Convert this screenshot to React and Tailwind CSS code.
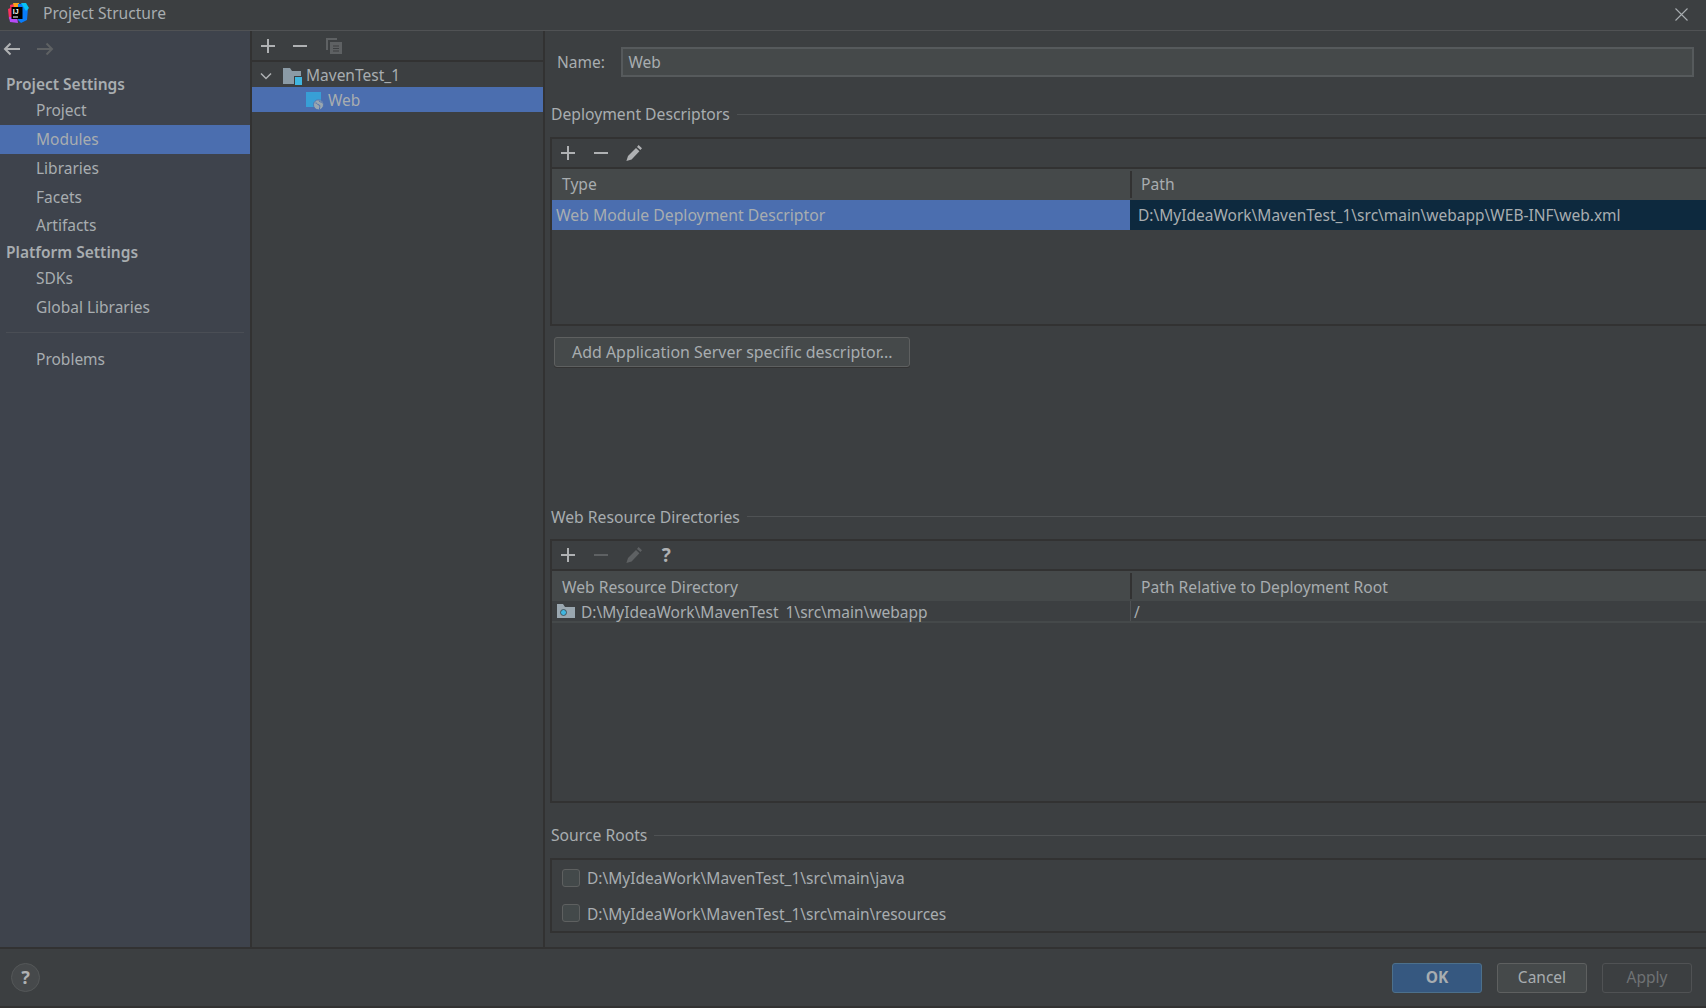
import React from "react";

const PlusIcon = ({ dim }) => (
  <svg width="14" height="14" viewBox="0 0 14 14" className={dim ? "text-[#5e6163]" : "text-[#afb1b3]"}>
    <path d="M6 0h2v6h6v2H8v6H6V8H0V6h6z" fill="currentColor" />
  </svg>
);

const MinusIcon = ({ dim }) => (
  <svg width="14" height="14" viewBox="0 0 14 14" className={dim ? "text-[#5e6163]" : "text-[#afb1b3]"}>
    <path d="M0 6h14v2H0z" fill="currentColor" />
  </svg>
);

const PencilIcon = ({ dim }) => (
  <svg width="18" height="18" viewBox="0 0 18 18" className={dim ? "text-[#5e6163]" : "text-[#afb1b3]"}>
    <path d="M13.6 1 17 4.2l-1.6 1.9-3.4-3.2zM11 4l3.4 3.2-7.8 8.2L1.4 17l1.6-5z" fill="currentColor" />
  </svg>
);

const CopyIcon = () => (
  <svg width="18" height="18" viewBox="0 0 18 18" className="text-[#5e6163]">
    <path d="M1 1h11v2H3v10H1z" fill="currentColor" />
    <path d="M5 5h12v12H5z" fill="currentColor" />
    <path d="M8 8.500h6v1H8zM8 11h6v1H8zM8 13.500h6v1H8z" fill="#3c3f41" />
  </svg>
);

const ArrowIcon = ({ right, dim }) => (
  <svg width="18" height="14" viewBox="0 0 18 14" className={dim ? "text-[#5e6163]" : "text-[#afb1b3]"}>
    <path
      d={right ? "M1 7h15M10.500 1.500 16 7l-5.500 5.500" : "M17 7H2M7.500 1.500 2 7l5.500 5.500"}
      stroke="currentColor"
      strokeWidth="2"
      fill="none"
    />
  </svg>
);

const AppLogo = () => (
  <svg width="22" height="22" viewBox="0 0 22 22">
    <path d="M3 2 11 0l1 6-8 4z" fill="#fe315d" />
    <path d="M6 0h6v4H7z" fill="#f9a01b" />
    <path d="M1 6l5-2 2 13-6-1z" fill="#fe315d" />
    <path d="M2 14h8l1 6-8-1z" fill="#b74af7" />
    <path d="M11 1h7l3 4-1 12-6 3-3-3z" fill="#087cfa" />
    <path d="M14 0h5l3 5-3 3z" fill="#07c3f2" />
    <path d="M4.500 4h11v12h-11z" fill="#000" />
    <path d="M6 13.500h5v1H6z" fill="#fff" />
    <text x="5.800" y="11" fontSize="7" fontWeight="700" fill="#fff" fontFamily="Liberation Sans, sans-serif">IJ</text>
  </svg>
);

const ModuleFolder = () => (
  <svg width="19" height="18" viewBox="0 0 19 18">
    <path d="M0 1h7l2 3h9v13H0z" fill="#8b9ba6" />
    <path d="M11 9h8v8h-8z" fill="#3c3f41" />
    <path d="M12 10h7v8h-7z" fill="#40b6e0" />
  </svg>
);

const WebModule = () => (
  <svg width="18" height="18" viewBox="0 0 18 18">
    <path d="M0 0h15v15H0z" fill="#389fd6" />
    <circle cx="12.500" cy="12.800" r="5" fill="#9aa7b0" stroke="#4b6eaf" strokeWidth="0.800" />
    <path d="M9.500 11c2 0 2 2 3.500 2s.5 2 .5 4M13 8.500c0 2 3 1 3.500 2.500" stroke="#4b6eaf" strokeWidth="1" fill="none" />
  </svg>
);

const WebRootFolder = () => (
  <svg width="18" height="14" viewBox="0 0 18 14">
    <path d="M0 0h6l2 3h10v11H0z" fill="#9aa7b0" />
    <circle cx="6.500" cy="8.500" r="3" fill="#40b6e0" stroke="#3c3f41" strokeWidth="0.800" />
  </svg>
);

const Chevron = () => (
  <svg width="12" height="8" viewBox="0 0 12 8" className="text-[#afb1b3]">
    <path d="M1 1.500 6 6.500l5-5" stroke="currentColor" strokeWidth="1.500" fill="none" />
  </svg>
);

const navRows = [
  { label: "Project Settings", head: true, h: "h-[26px]" },
  { label: "Project", h: "h-[27px] pb-[2px]" },
  { label: "Modules", h: "h-[29px]", active: true },
  { label: "Libraries", h: "h-[28px] pt-[2px]" },
  { label: "Facets", h: "h-[29px] pt-[2px]" },
  { label: "Artifacts", h: "h-[28px] pt-[2px]" },
  { label: "Platform Settings", head: true, h: "h-[26px] pt-[2px]" },
  { label: "SDKs", h: "h-[27px]" },
  { label: "Global Libraries", h: "h-[29px] pt-[2px]" },
];

const SectionTitle = ({ children, textPad = "pt-[1px]" }) => (
  <div className="flex h-5 items-center gap-[7px] pl-px">
    <span className={`whitespace-nowrap text-[15.700px] ${textPad}`}>{children}</span>
    <div className="h-px flex-1 bg-[#4f5254]" />
  </div>
);

const Toolbar = ({ children }) => (
  <div className="flex h-[30px] items-center border-b-2 border-[#323232]">{children}</div>
);

const ToolSlot = ({ children }) => (
  <div className="flex w-[32.700px] shrink-0 items-center justify-center">{children}</div>
);

const HeaderRow = ({ left, right, height, textPad }) => (
  <div className={`flex bg-[#45494a] text-[15.650px] ${height}`}>
    <div className={`flex w-[578px] shrink-0 items-center pl-[10px] ${textPad}`}>{left}</div>
    <div className="my-[2px] w-[2px] bg-[#323232]" />
    <div className={`flex flex-1 items-center pl-[9px] ${textPad}`}>{right}</div>
  </div>
);

const RootRow = ({ text }) => (
  <div className="flex items-center gap-[7px]">
    <div className="h-[18px] w-[18px] rounded-[3px] border border-[#5e6060] bg-[#43494a]" />
    <span className="pt-[2px]">{text}</span>
  </div>
);

export default function App() {
  return (
    <div
      className="flex h-[1008px] w-full flex-col overflow-hidden bg-[#3c3f41] text-[15.500px] text-[#a8adb0]"
      style={{ fontFamily: '"Noto Sans", sans-serif' }}
    >
      <div className="flex h-[31px] shrink-0 items-center border-b border-[#505254] pb-[2px] pl-[7px] pr-[18px]">
        <AppLogo />
        <span className="ml-[14px] text-[15.600px]">Project Structure</span>
        <svg width="13" height="13" viewBox="0 0 13 13" className="ml-auto text-[#a8adb0]">
          <path d="M.500.500l12 12M12.500.500l-12 12" stroke="currentColor" strokeWidth="1.100" />
        </svg>
      </div>

      <div className="flex min-h-0 flex-1">
        <aside className="w-[250px] shrink-0 bg-[#3e434c]">
          <div className="flex h-[41px] items-center gap-[15px] pb-[6px] pl-[3px]">
            <ArrowIcon />
            <ArrowIcon right dim />
          </div>
          {navRows.map((row) => (
            <div
              key={row.label}
              className={`flex items-center ${row.h} ${row.head ? "pl-[6px] font-semibold" : "pl-[36px]"} ${
                row.active ? "bg-[#4b6eaf]" : ""
              }`}
            >
              {row.label}
            </div>
          ))}
          <div className="mx-[6px] mt-[11px] h-px bg-[#4a4e55]" />
          <div className="mt-[13px] flex h-[28px] items-center pl-[36px]">Problems</div>
        </aside>

        <div className="w-[2px] bg-[#323232]" />

        <div className="flex w-[291px] shrink-0 flex-col">
          <div className="flex h-[31px] items-center gap-[18px] border-b-2 border-[#323232] pl-[9px]">
            <PlusIcon />
            <MinusIcon />
            <CopyIcon />
          </div>
          <div className="flex h-[25px] items-center pl-[8px] pt-[2px]">
            <Chevron />
            <div className="ml-[11px] mr-[4px]"><ModuleFolder /></div>
            MavenTest_1
          </div>
          <div className="flex h-[25px] items-center gap-[4px] bg-[#4b6eaf] pl-[54px] pt-[2px]">
            <WebModule />
            Web
          </div>
        </div>

        <div className="w-[2px] bg-[#323232]" />

        <main className="min-w-0 flex-1 overflow-hidden pl-[5px]">
          <div className="mt-[16px] flex h-[30px] items-center pr-[12px]">
            <span className="ml-[7px] w-[63.500px] shrink-0 pt-[2px]">Name:</span>
            <div className="flex h-full flex-1 items-center border-2 border-[#565a5c] bg-[#45494a] pl-[6px] pt-[2px]">Web</div>
          </div>

          <div className="mt-[27px]">
            <SectionTitle>Deployment Descriptors</SectionTitle>
          </div>
          <div className="mt-[13px] h-[189px] border-2 border-r-0 border-[#323232]">
            <Toolbar>
              <ToolSlot><PlusIcon /></ToolSlot>
              <ToolSlot><MinusIcon /></ToolSlot>
              <ToolSlot><PencilIcon /></ToolSlot>
            </Toolbar>
            <HeaderRow left="Type" right="Path" height="h-[31px]" textPad="pt-[1px]" />
            <div className="flex h-[30px]">
              <div className="flex w-[578px] shrink-0 items-center bg-[#4b6eaf] pl-[4px] pt-[2px] text-[15.750px]">Web Module Deployment Descriptor</div>
              <div className="flex flex-1 items-center bg-[#0d293e] pl-[8px] pt-[2px]">
                {"D:\\MyIdeaWork\\MavenTest_1\\src\\main\\webapp\\WEB-INF\\web.xml"}
              </div>
            </div>
          </div>

          <button className="ml-[4px] mt-[11px] flex h-[30px] w-[356px] items-center rounded-[3px] border border-[#5e6060] bg-[#45494a] pl-[17px] pt-[2px] text-[15.950px] shadow-[0_1px_0_#333]">
            Add Application Server specific descriptor...
          </button>

          <div className="mt-[139px]">
            <SectionTitle textPad="pt-[3px]">Web Resource Directories</SectionTitle>
          </div>
          <div className="mt-[13px] h-[264px] border-2 border-r-0 border-[#323232]">
            <Toolbar>
              <ToolSlot><PlusIcon /></ToolSlot>
              <ToolSlot><MinusIcon dim /></ToolSlot>
              <ToolSlot><PencilIcon dim /></ToolSlot>
              <ToolSlot><span className="text-[19px] font-bold leading-none text-[#afb1b3]">?</span></ToolSlot>
            </Toolbar>
            <HeaderRow left="Web Resource Directory" right="Path Relative to Deployment Root" height="h-[30px]" textPad="pt-[3px]" />
            <div className="flex h-[22px] border-b-2 border-[#45494a]">
              <div className="flex h-full w-[578px] shrink-0 pl-[5px]">
                <div className="pt-[3px]"><WebRootFolder /></div>
                <span className="ml-[6px] pt-[1px] leading-[20px]">
                  {"D:\\MyIdeaWork\\MavenTest"}
                  {/* the row's bottom line hides the underscore in the real dialog */}
                  <span className="text-transparent">_</span>
                  {"1\\src\\main\\webapp"}
                </span>
              </div>
              <div className="w-px bg-[#4f5254]" />
              <div className="flex-1 pl-[3px] pt-[1px] leading-[20px]">/</div>
            </div>
          </div>

          <div className="mt-[22px]">
            <SectionTitle>Source Roots</SectionTitle>
          </div>
          <div className="mt-[13px] flex h-[75px] flex-col justify-center gap-[10px] border-2 border-r-0 border-[#323232] pl-[10px]">
            <RootRow text={"D:\\MyIdeaWork\\MavenTest_1\\src\\main\\java"} />
            <RootRow text={"D:\\MyIdeaWork\\MavenTest_1\\src\\main\\resources"} />
          </div>
        </main>
      </div>

      <footer className="flex h-[61px] shrink-0 items-center border-y-2 border-[#323232] pl-[11px] pr-[14px]">
        <div className="flex h-[29px] w-[29px] items-center justify-center rounded-full border border-[#555859] bg-[#46494b] text-[18px] font-bold text-[#afb1b3]">
          ?
        </div>
        <div className="ml-auto flex gap-[15px]">
          <button className="h-[30px] w-[90px] rounded-[3px] border border-[#4c708c] bg-[#365880] font-bold">OK</button>
          <button className="h-[30px] w-[90px] rounded-[3px] border border-[#5e6060] bg-[#45494a]">Cancel</button>
          <button className="h-[30px] w-[90px] rounded-[3px] border border-[#505254] text-[#6f7274]">Apply</button>
        </div>
      </footer>
    </div>
  );
}
